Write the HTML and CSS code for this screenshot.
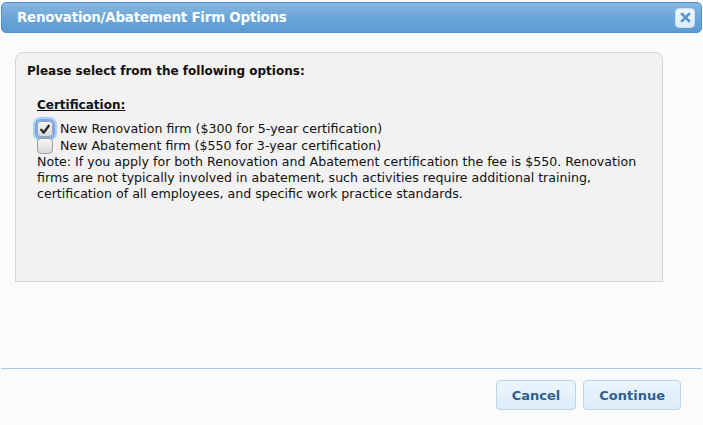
FILE: index.html
```html
<!DOCTYPE html>
<html>
<head>
<meta charset="utf-8">
<link rel="stylesheet" href="styles.css">
</head>
<body>
<div class="dialog">
  <div class="titlebar">
    <span class="title">Renovation/Abatement Firm Options</span>
    <button class="close" aria-label="close">
      <svg width="11" height="11" viewBox="0 0 11 11"><path d="M2 2 L9 9 M9 2 L2 9" stroke="#5b95c9" stroke-width="2.6" stroke-linecap="square"/></svg>
    </button>
  </div>
  <div class="content">
    <div class="panel">
      <p class="lead">Please select from the following options:</p>
      <div class="group">
        <p class="group-title">Certification:</p>
        <label class="option first">
          <span class="box focus">
            <svg width="12" height="11" viewBox="0 0 12 11"><path d="M2.2 5.8 L4.8 8.6 L9.8 1.8" stroke="#2a2a2a" stroke-width="2.4" fill="none" stroke-linecap="round" stroke-linejoin="round"/></svg>
          </span>
          <span>New Renovation firm ($300 for 5-year certification)</span>
        </label>
        <label class="option second">
          <span class="box"></span>
          <span>New Abatement firm ($550 for 3-year certification)</span>
        </label>
        <p class="note">Note: If you apply for both Renovation and Abatement certification the fee is $550. Renovation firms are not typically involved in abatement, such activities require additional training, certification of all employees, and specific work practice standards.</p>
      </div>
    </div>
  </div>
  <div class="footer">
    <button class="btn">Cancel</button>
    <button class="btn">Continue</button>
  </div>
</div>
</body>
</html>
```

FILE: styles.css
```css
html, body {
  margin: 0;
  padding: 0;
  background: #fafcfc;
}
body {
  font-family: "DejaVu Sans", Verdana, sans-serif;
  font-size: 12.6px;
  color: #111;
}
.dialog {
  width: 703px;
  height: 425px;
  display: flex;
  flex-direction: column;
}
.titlebar {
  margin: 2px 1px 0 1px;
  height: 31px;
  box-sizing: border-box;
  border: 1px solid #4f8fca;
  border-radius: 5px;
  background: linear-gradient(#86b8e1, #6aa5d8 55%, #5c9bd2);
  display: flex;
  align-items: center;
  justify-content: space-between;
  padding: 0 6px 0 15px;
}
.title {
  color: #fff;
  font-weight: bold;
  font-size: 13.4px;
  letter-spacing: -0.2px;
}
.close {
  width: 20px;
  height: 20px;
  padding: 0;
  border: 1px solid #c9def1;
  border-radius: 4px;
  background: linear-gradient(#f2f8fd, #dcebf8);
  display: flex;
  align-items: center;
  justify-content: center;
}
.content {
  padding: 19px 40px 0 15px;
  flex: 0 0 auto;
}
.panel {
  height: 230px;
  box-sizing: border-box;
  background: #f2f2f2;
  border: 1px solid #d4d4d4;
  border-top-left-radius: 8px;
  border-top-right-radius: 8px;
  padding: 10px 11px;
}
.lead {
  margin: 0;
  font-weight: bold;
  font-size: 12px;
  line-height: 16px;
}
.group {
  margin-top: 18px;
  padding-left: 10px;
}
.group-title {
  margin: 0;
  font-weight: bold;
  font-size: 12px;
  text-decoration: underline;
  line-height: 16px;
}
.option {
  display: flex;
  align-items: center;
  gap: 7px;
  line-height: 16px;
}
.option.first {
  margin-top: 7px;
  height: 18px;
}
.option.second {
  height: 16px;
}
.box {
  width: 16px;
  height: 16px;
  box-sizing: border-box;
  border: 1px solid #a2a2a2;
  border-radius: 4px;
  background: linear-gradient(#f6f6f6, #d9d9d9);
  display: flex;
  align-items: center;
  justify-content: center;
}
.box.focus {
  box-shadow: 0 0 0 2px #76aaed, 0 0 1px 4px #a9cbf4;
}
.note {
  margin: 0;
  line-height: 16px;
  padding-right: 8px;
}
.footer {
  margin: 86px 1px 0 1px;
  border-top: 1px solid #a5cae6;
  display: flex;
  justify-content: flex-end;
  gap: 7px;
  padding: 11px 21px 0 0;
}
.btn {
  height: 30px;
  padding: 0 15px;
  font-family: "DejaVu Sans", Verdana, sans-serif;
  font-size: 13px;
  font-weight: bold;
  color: #2f5f8f;
  border: 1px solid #b9d5ec;
  border-radius: 4px;
  background: linear-gradient(#ebf5fd, #dcecf9);
}
```
